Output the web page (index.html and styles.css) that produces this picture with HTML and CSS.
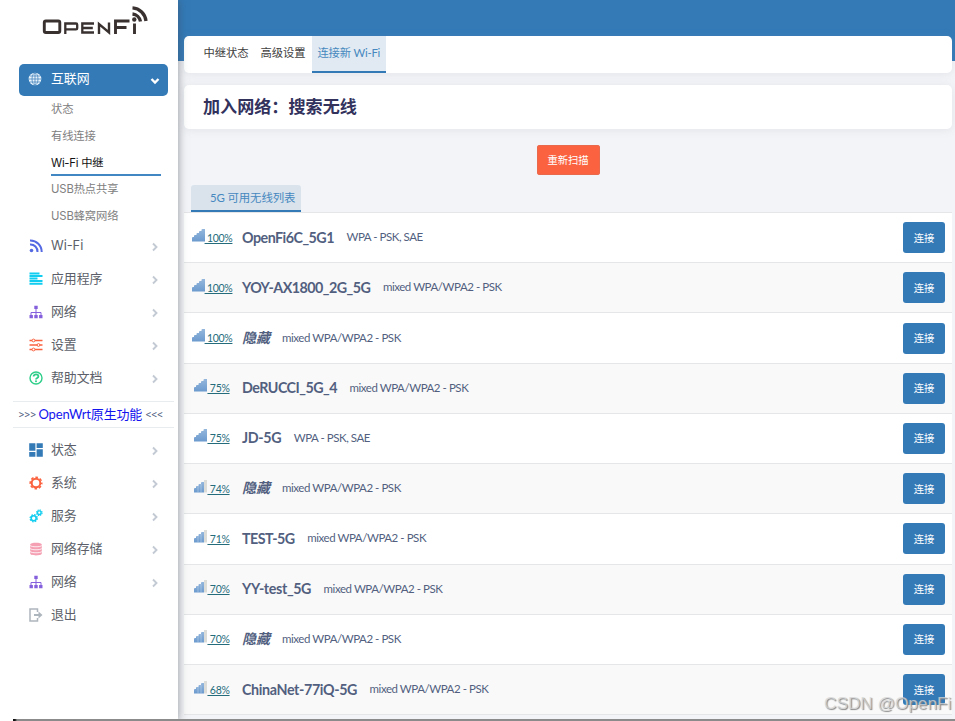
FILE: index.html
```html
<!DOCTYPE html>
<html lang="zh-CN">
<head>
<meta charset="utf-8">
<title>OpenFi</title>
<link rel="stylesheet" href="styles.css">
</head>
<body>
<svg class="defs" width="0" height="0" aria-hidden="true">
  <defs>
    <linearGradient id="bar" x1="0" y1="0" x2="0" y2="1"><stop offset="0" stop-color="#94b7dc"/><stop offset="1" stop-color="#6c9ace"/></linearGradient>
    <symbol id="chev" viewBox="0 0 8 10"><path d="M2 1.500 5.500 5 2 8.500" fill="none" stroke="#c3cad3" stroke-width="1.900"/></symbol>
    <symbol id="net" viewBox="0 0 14 14"><path d="M5.300 .7h3.400v3.400h-3.400zM.5 10h3.400v3.300H.5zM5.300 10h3.400v3.300H5.300zM10.100 10h3.400v3.300h-3.400z" fill="#8560dc"/><path d="M7 4v6M2 10V7.500h10V10" fill="none" stroke="#8560dc"/></symbol>
    <symbol id="s4" viewBox="0 0 13 13"><path d="M0 12.500V9q0-1 1-1h1V7q0-1 1-1h1.500V5q0-1 1-1H7V3q0-1 1-1h1.500V1q0-1 1-1H13v12.500z" fill="url(#bar)"/></symbol>
    <symbol id="s3" viewBox="0 0 13 13"><path d="M10 0h3v12.500h-3z" fill="#dcddd9"/><path d="M0 12.500V9q0-1 1-1h1V7q0-1 1-1h1.500V5q0-1 1-1H7V3q0-1 1-1h2v10.500z" fill="url(#bar)"/><path d="M4 6v6.500M7 4v8.500" stroke="#cbdcee" stroke-width=".5"/></symbol>
  </defs>
</svg>
<div class="app">
  <aside class="sidebar">
    <svg class="logo" viewBox="0 0 108 32" width="108" height="32">
      <g fill="none" stroke="#393130" stroke-width="2.900">
        <rect x="2.300" y="15" width="15.500" height="11.500" rx="1.500"/>
        <path d="M23.300 28V17.500H34q1.200 0 1.200 1.200v3.500q0 1.200-1.200 1.200H23.300M52 17.500H40.300v9H52M40.300 22h10.500" stroke-width="2.300"/>
        <path d="M57 28V18L67 26.500V16.500" stroke-width="2.400"/>
        <path d="M73.500 28V15h14M73.500 21.500h11M92.500 28V17.500"/>
        <path d="M90.500 8A9 9 0 0 1 98.500 15.500M90.500 1.900A14.500 14.500 0 0 1 104 15" stroke-width="3.300"/>
      </g>
      <circle cx="92.300" cy="13.500" r="2.200" fill="#393130"/>
    </svg>
    <nav class="menu">
      <div class="item active">
        <svg class="icon" viewBox="0 0 14 14"><circle cx="7" cy="7" r="6.300" fill="#e8f3fb"/><g fill="none" stroke="#337ab7" stroke-width=".7"><ellipse cx="7" cy="7" rx="3" ry="6"/><path d="M7 1v12M1 7h12M2 4h10M2 10h10"/></g></svg>
        <span>互联网</span>
        <svg class="down" viewBox="0 0 10 8"><path d="M1.500 2 5 5.500 8.500 2" fill="none" stroke="#fff" stroke-width="2.400"/></svg>
      </div>
      <div class="submenu">
        <a>状态</a><a>有线连接</a><a class="current">Wi-Fi 中继</a><a>USB热点共享</a><a>USB蜂窝网络</a>
      </div>
      <div class="item"><svg class="icon" viewBox="0 0 14 14"><g fill="none" stroke="#5469e2" stroke-width="2"><path d="M1 5.500A7 7 0 0 1 8.500 13M1 1.500A11.300 11.300 0 0 1 12.700 13"/></g><circle cx="2.500" cy="11.500" r="1.800" fill="#5469e2"/></svg><span>Wi-Fi</span><svg class="chev"><use href="#chev"/></svg></div>
      <div class="item"><svg class="icon" viewBox="0 0 14 14"><path d="M.5 1.500h10M.5 4h13M.5 6.500h8M.5 9h13M.5 11.700h13" stroke="#11cdef" stroke-width="1.900"/></svg><span>应用程序</span><svg class="chev"><use href="#chev"/></svg></div>
      <div class="item"><svg class="icon"><use href="#net"/></svg><span>网络</span><svg class="chev"><use href="#chev"/></svg></div>
      <div class="item"><svg class="icon" viewBox="0 0 14 14"><path d="M.5 2.500h13M.5 7h13M.5 11.500h13" stroke="#fb6340" stroke-width="1.500"/><g fill="#fff" stroke="#fb6340"><circle cx="4.500" cy="2.500" r="1.400"/><circle cx="9.500" cy="7" r="1.400"/><circle cx="4.500" cy="11.500" r="1.400"/></g></svg><span>设置</span><svg class="chev"><use href="#chev"/></svg></div>
      <div class="item"><svg class="icon" viewBox="0 0 14 14"><g fill="none" stroke="#2dce89" stroke-width="1.400"><circle cx="7" cy="7" r="6"/><path d="M4.600 5.500c0-2.800 4.800-2.600 4.800 0 0 1.500-2.400 1.400-2.400 3" stroke-width="1.800"/></g><circle cx="7" cy="10.300" r="1" fill="#2dce89"/></svg><span>帮助文档</span><svg class="chev"><use href="#chev"/></svg></div>
    </nav>
    <div class="divider"><i>&gt;&gt;&gt;</i> <a>OpenWrt原生功能</a> <i>&lt;&lt;&lt;</i></div>
    <nav class="menu">
      <div class="item"><svg class="icon" viewBox="0 0 14 14"><path d="M.2.300h6.200v7.500h-6.200zM7.600.300h6.200V5h-6.200zM.2 9h6.200v4.700h-6.200zM7.600 6.200h6.200v7.500h-6.200z" fill="#337ab7"/></svg><span>状态</span><svg class="chev"><use href="#chev"/></svg></div>
      <div class="item"><svg class="icon" viewBox="0 0 14 14"><g fill="none" stroke="#fb6340"><circle cx="7" cy="7" r="4.300" stroke-width="2"/><circle cx="7" cy="7" r="5.800" stroke-width="1.500" stroke-dasharray="2.600 1.956" stroke-dashoffset="1.300"/></g></svg><span>系统</span><svg class="chev"><use href="#chev"/></svg></div>
      <div class="item"><svg class="icon" viewBox="0 0 14 14"><g fill="none" stroke="#11cdef"><circle cx="4.700" cy="9.300" r="2.500" stroke-width="1.600"/><circle cx="4.700" cy="9.300" r="3.600" stroke-width="1.300" stroke-dasharray="1.600 1.228"/><circle cx="10.300" cy="3.700" r="1.800" stroke-width="1.400"/><circle cx="10.300" cy="3.700" r="2.800" stroke-width="1.100" stroke-dasharray="1.300 .9"/></g></svg><span>服务</span><svg class="chev"><use href="#chev"/></svg></div>
      <div class="item"><svg class="icon" viewBox="0 0 14 14"><path d="M1.200 2.500c0-2.500 11.600-2.500 11.600 0v9c0 2.500-11.600 2.500-11.600 0z" fill="#f5a0b3"/><path d="M1.200 3.500c1 1.700 10.600 1.700 11.600 0M1.200 6.500c1 1.700 10.600 1.700 11.600 0M1.200 9.500c1 1.700 10.600 1.700 11.600 0" fill="none" stroke="#fff" stroke-width=".8"/></svg><span>网络存储</span><svg class="chev"><use href="#chev"/></svg></div>
      <div class="item"><svg class="icon"><use href="#net"/></svg><span>网络</span><svg class="chev"><use href="#chev"/></svg></div>
      <div class="item"><svg class="icon" viewBox="0 0 14 14"><path d="M8.500 4V1H1v12h7.500v-3" fill="none" stroke="#adb5bd" stroke-width="1.500"/><path d="M5 6h4.500V3.500L13.500 7l-4 3.500V8H5z" fill="#adb5bd"/></svg><span>退出</span></div>
    </nav>
  </aside>
  <main class="content">
    <div class="tabs card"><a>中继状态</a><a>高级设置</a><a class="on">连接新 Wi-Fi</a></div>
    <h2 class="title card">加入网络：搜索无线</h2>
    <div class="scan"><button class="rescan">重新扫描</button></div>
    <div class="band"><span>5G 可用无线列表</span></div>
    <div class="list">
      <div class="row"><div class="sig"><svg><use href="#s4"/></svg><u>&nbsp;100%</u></div><b>OpenFi6C_5G1</b><span>WPA - PSK, SAE</span><button>连接</button></div>
      <div class="row"><div class="sig"><svg><use href="#s4"/></svg><u>&nbsp;100%</u></div><b>YOY-AX1800_2G_5G</b><span>mixed WPA/WPA2 - PSK</span><button>连接</button></div>
      <div class="row"><div class="sig"><svg><use href="#s4"/></svg><u>&nbsp;100%</u></div><b class="hidden">隐藏</b><span>mixed WPA/WPA2 - PSK</span><button>连接</button></div>
      <div class="row"><div class="sig"><svg><use href="#s4"/></svg><u>&nbsp;75%</u></div><b>DeRUCCI_5G_4</b><span>mixed WPA/WPA2 - PSK</span><button>连接</button></div>
      <div class="row"><div class="sig"><svg><use href="#s4"/></svg><u>&nbsp;75%</u></div><b class="loose">JD-5G</b><span>WPA - PSK, SAE</span><button>连接</button></div>
      <div class="row"><div class="sig"><svg><use href="#s3"/></svg><u>&nbsp;74%</u></div><b class="hidden">隐藏</b><span>mixed WPA/WPA2 - PSK</span><button>连接</button></div>
      <div class="row"><div class="sig"><svg><use href="#s3"/></svg><u>&nbsp;71%</u></div><b>TEST-5G</b><span>mixed WPA/WPA2 - PSK</span><button>连接</button></div>
      <div class="row"><div class="sig"><svg><use href="#s3"/></svg><u>&nbsp;70%</u></div><b class="loose">YY-test_5G</b><span>mixed WPA/WPA2 - PSK</span><button>连接</button></div>
      <div class="row"><div class="sig"><svg><use href="#s3"/></svg><u>&nbsp;70%</u></div><b class="hidden">隐藏</b><span>mixed WPA/WPA2 - PSK</span><button>连接</button></div>
      <div class="row"><div class="sig"><svg><use href="#s3"/></svg><u>&nbsp;68%</u></div><b class="loose">ChinaNet-77iQ-5G</b><span>mixed WPA/WPA2 - PSK</span><button>连接</button></div>
    </div>
  </main>
  <div class="edge"></div>
  <div class="watermark">CSDN @OpenFi</div>
</div>
</body>
</html>
```

FILE: styles.css
```css
* { box-sizing: border-box; }
body { margin: 0; background: #fff; font-family: Lato, "Noto Sans CJK SC", sans-serif; color: #525f7f; }
.defs { position: absolute; }
.app { position: relative; display: flex; width: 955px; height: 721px; overflow: hidden; }
.sidebar { position: relative; z-index: 1; flex: none; width: 178px; background: #fff; box-shadow: 0 0 9px rgba(60, 70, 80, .55); }
.logo { display: block; margin: 6px 0 26px 42px; }
.item { display: flex; align-items: center; height: 33.100px; padding-left: 29px; font-size: 12.900px; color: #5c5f69; }
.item span { margin-left: 8px; flex: 1; font-family: Inter, "Noto Sans CJK SC", sans-serif; line-height: 18px; letter-spacing: -.05px; }
.item .icon { flex: none; width: 14px; height: 14px; margin-top: -1px; }
.item .chev { width: 8px; height: 10px; margin: 2px 19px 0 0; }
.item.active { height: 32px; margin: 0 10px 0 19px; padding-left: 10px; background: #337ab7; color: #fff; border-radius: 5px; }
.active .down { width: 10px; height: 8px; margin: 1px 8px 0 0; }
.item.active .icon { margin: -2px 0 0 -1px; }
.item.active span { margin-left: 9px; padding-bottom: 3px; }
.submenu { padding: 0 17px 0 51px; height: 133.500px; font: 11.300px Inter, "Noto Sans CJK SC", sans-serif; letter-spacing: -.12px; }
.submenu a { display: block; height: 26.650px; line-height: 27px; color: #808080; }
.submenu .current { line-height: 28px; letter-spacing: -.25px; color: #111; border-bottom: 2px solid #4187c4; }
.divider { display: flex; align-items: center; gap: 3px; height: 27px; margin: 6px 4px 5.500px 13px; padding: 0 0 2px 5px; border: solid #e9ecef; border-width: 1px 0; white-space: nowrap; }
.divider a { color: #1414ee; font-size: 13px; letter-spacing: -.15px; }
.divider i { font: 10px Inter, sans-serif; letter-spacing: -.8px; padding-top: 2px; }
.content { flex: 1; min-width: 0; padding: 36px 3px 0 6px; background: linear-gradient(#337ab7 61px, #f3f4f7 61px); }
.card { background: #fff; border-radius: 5px; box-shadow: 0 1px 8px rgba(136, 152, 170, .16); }
.tabs { display: flex; height: 37px; margin-bottom: 12px; padding-left: 13.500px; overflow: hidden; font-size: 11.300px; color: #404040; }
.tabs a { padding: 0 6px; line-height: 34px; letter-spacing: -.05px; }
.tabs .on { width: 74px; letter-spacing: -.2px; background: #e1eaf2; color: #4688bf; border-bottom: 2px solid #337ab7; white-space: nowrap; }
.title { height: 44px; margin: 0; padding-left: 19px; font: 700 17.100px/42px "Noto Sans CJK SC", sans-serif; color: #32325d; }
.scan { display: flex; justify-content: center; padding: 16px 0 10px; }
button { border: 0; padding: 0 0 1px; font: 10.300px "Noto Sans CJK SC", sans-serif; color: #fff; background: #337ab7; border-radius: 3px; }
.rescan { width: 63px; height: 30px; background: #fb6340; box-shadow: 0 0 0 1px #e9694d inset; }
.band { display: flex; height: 27px; padding-left: 7px; }
.band span { width: 110px; padding-left: 19px; line-height: 25px; border-radius: 3px 3px 0 0; border-bottom: 2px solid #337ab7; background: #dae3ec; color: #4688bf; font-size: 11.400px; letter-spacing: -.1px; white-space: nowrap; }
.row { display: flex; align-items: center; height: 50.220px; padding-right: 7px; border-top: 1px solid #e5e6e8; background: #fff; white-space: nowrap; }
.list { border-bottom: 1px solid #e5e6e8; }
.row:nth-child(even) { background: #f9f9f9; }
.sig { display: flex; justify-content: center; width: 56px; margin-right: 2px; font-size: 10.500px; letter-spacing: -.3px; color: #246b7b; }
.sig svg { width: 13px; height: 13px; margin-top: -3px; }
.sig u { text-decoration: underline; text-decoration-skip-ink: none; }
.row b { font-weight: 700; font-size: 14.300px; letter-spacing: -.52px; padding-bottom: 1px; }
.row .loose { letter-spacing: -.37px; }
.row .hidden { font-style: italic; font-size: 14px; letter-spacing: 0; padding-bottom: 3px; }
.row > span { margin-left: 12.500px; flex: 1; font-size: 11.500px; letter-spacing: -.45px; padding-bottom: 2px; }
.row .hidden + span { margin-left: 12px; }
.row button { width: 42px; height: 31px; }
.edge { position: absolute; z-index: 2; left: 13px; right: 0; bottom: 0; height: 2px; background: linear-gradient(90deg, #111 2px, #8b8b8b 4px); }
.watermark { position: absolute; z-index: 3; left: 824px; top: 692px; font: 17.200px/22px "Liberation Sans", sans-serif; color: rgba(215, 215, 215, .75); text-shadow: 1px 1px 1px #888; white-space: nowrap; }
```
